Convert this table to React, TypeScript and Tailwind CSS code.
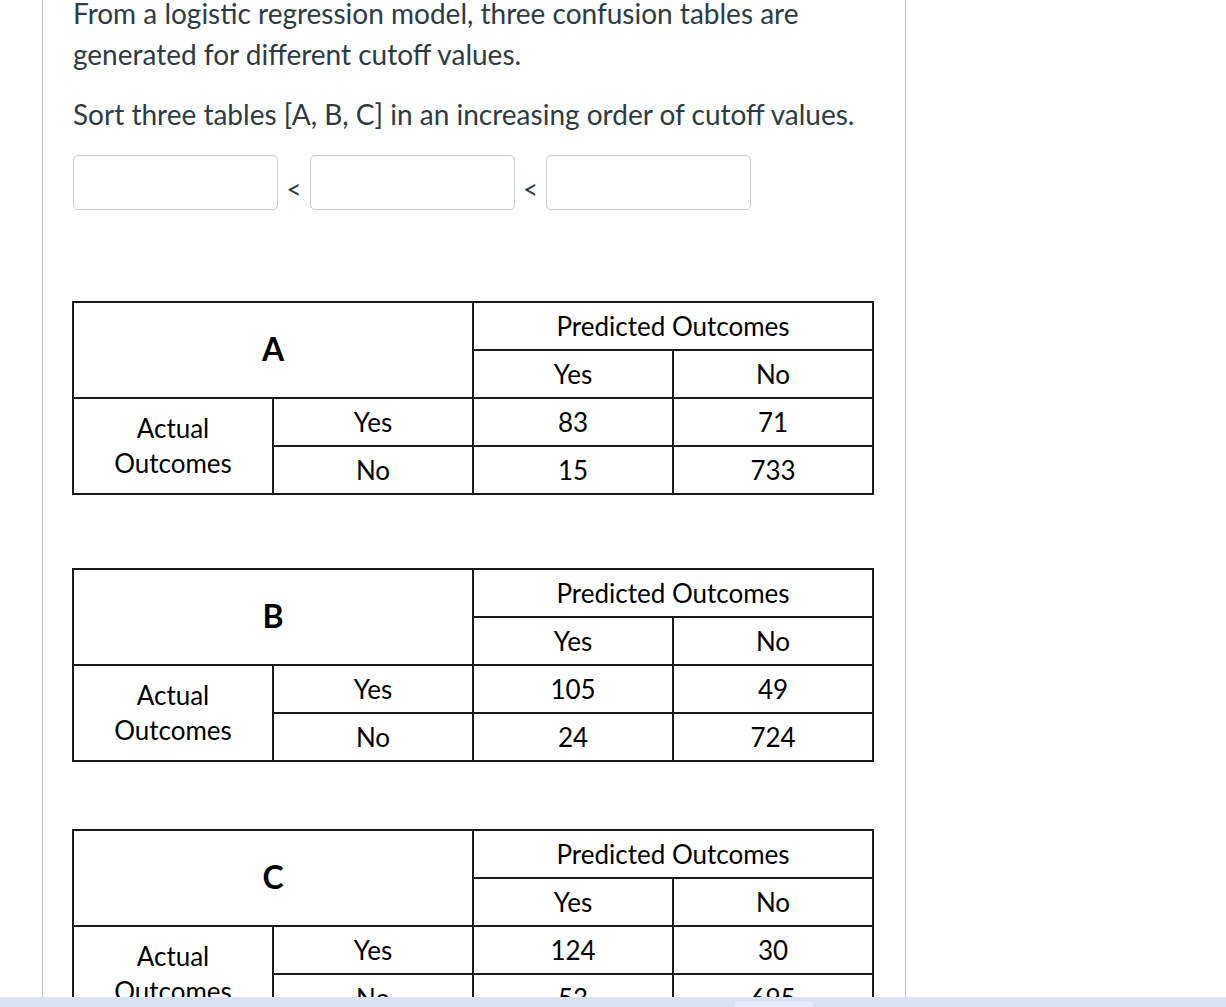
import React from "react";

type TableData = {
  label: string;
  yesYes: number;
  yesNo: number;
  noYes: number;
  noNo: number;
};

const tables: TableData[] = [
  { label: "A", yesYes: 83, yesNo: 71, noYes: 15, noNo: 733 },
  { label: "B", yesYes: 105, yesNo: 49, noYes: 24, noNo: 724 },
  { label: "C", yesYes: 124, yesNo: 30, noYes: 53, noNo: 695 },
];

const cell = "border-2 border-[#1c1c1c] w-[200px] h-[48px] text-center align-middle p-0";

function ConfusionTable({ data, className }: { data: TableData; className: string }) {
  return (
    <table
      className={`border-collapse text-black text-[26px] leading-[35px] ${className}`}
      style={{ fontFamily: "Lato, 'Open Sans', sans-serif" }}
    >
      <tbody>
        <tr>
          <td colSpan={2} rowSpan={2} className={cell}>
            <span className="text-[32px] font-bold">{data.label}</span>
          </td>
          <td colSpan={2} className={cell}>
            Predicted Outcomes
          </td>
        </tr>
        <tr>
          <td className={cell}>Yes</td>
          <td className={cell}>No</td>
        </tr>
        <tr>
          <td rowSpan={2} className={cell}>
            Actual
            <br />
            Outcomes
          </td>
          <td className={cell}>Yes</td>
          <td className={cell}>{data.yesYes}</td>
          <td className={cell}>{data.yesNo}</td>
        </tr>
        <tr>
          <td className={cell}>No</td>
          <td className={cell}>{data.noYes}</td>
          <td className={cell}>{data.noNo}</td>
        </tr>
      </tbody>
    </table>
  );
}

export default function App() {
  return (
    <div className="relative h-[1007px] overflow-hidden bg-white">
      <div
        className="ml-[42px] w-[864px] h-full border-x border-[#c0c4c8] pl-[30px] text-[#2d3b45]"
        style={{ fontFamily: "Lato, 'Liberation Sans', sans-serif" }}
      >
        <div className="-mt-[7px]">
          {/* Question text */}
          <p className="text-[28px] leading-[41px] whitespace-nowrap">
            From a logistic regression model, three confusion tables are
            <br />
            generated for different cutoff values.
          </p>
          <p className="mt-[19px] text-[28px] leading-[41px] whitespace-nowrap">
            Sort three tables [A, B, C] in an increasing order of cutoff values.
          </p>

          {/* Answer inputs */}
          <div className="mt-[20px] flex items-center">
            <input className="w-[205px] h-[55px] rounded-[5px] border border-[#c7cdd1] bg-white" />
            <span className="w-[32px] text-center text-[26px] leading-none mt-[12px]">&lt;</span>
            <input className="w-[205px] h-[55px] rounded-[5px] border border-[#c7cdd1] bg-white" />
            <span className="w-[31px] text-center text-[26px] leading-none mt-[12px]">&lt;</span>
            <input className="w-[205px] h-[55px] rounded-[5px] border border-[#c7cdd1] bg-white" />
          </div>

          {/* Tables */}
          <ConfusionTable data={tables[0]} className="mt-[91px] -ml-[1px]" />
          <ConfusionTable data={tables[1]} className="mt-[73px] -ml-[1px]" />
          <ConfusionTable data={tables[2]} className="mt-[67px] -ml-[1px]" />
        </div>
      </div>

      {/* bottom bar */}
      <div className="absolute bottom-0 left-0 right-0 h-[10px] bg-[#d8e2f3]">
        <div className="absolute bottom-0 left-[735px] w-[78px] h-[6px] rounded-t-[3px] bg-[#e6ecf7]" />
      </div>
    </div>
  );
}
